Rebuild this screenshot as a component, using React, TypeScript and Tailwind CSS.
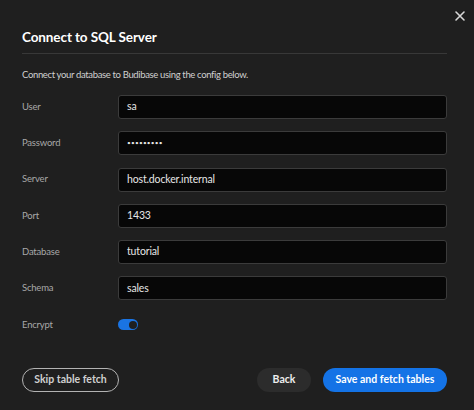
import React from "react";

const font = { fontFamily: '"Lato", "Liberation Sans", sans-serif' };

function Row({ label, value, dots }: { label: string; value: string; dots?: boolean }) {
  return (
    <div className="flex items-center h-[24px]">
      <div className="w-[96px] shrink-0 text-[9.5px] tracking-[-0.2px] text-[#a8a8a8]">{label}</div>
      <div className="flex-1 h-[24px] rounded-[3px] border border-[#3b3b3b] bg-[#070707] flex items-center px-[8px] text-[10.5px] tracking-[-0.15px] text-[#e6e6e6]">
        {dots ? <span className="text-[6.5px] tracking-[0.2px]">{value}</span> : value}
      </div>
    </div>
  );
}

export default function App() {
  return (
    <div className="relative w-[474px] h-[410px] bg-[#1f1f1f] pl-[22px] pr-[27px] pt-[27px]" style={font}>
      <button className="absolute top-[8px] right-[6px] w-[16px] h-[16px] flex items-center justify-center text-[#d8d8d8]">
        <svg width="12" height="12" viewBox="0 0 12 12" fill="none" stroke="currentColor" strokeWidth="1.6" strokeLinecap="round">
          <path d="M2 2 L10 10 M10 2 L2 10" />
        </svg>
      </button>
      <h1 className="text-[13.5px] font-bold leading-[20px] tracking-[-0.1px] text-white">Connect to SQL Server</h1>
      <div className="mt-[6px] h-px bg-[#383838]" />
      <p className="mt-[14px] text-[9.5px] leading-[14px] tracking-[-0.35px] text-[#d0d0d0]">
        Connect your database to Budibase using the config below.
      </p>
      <div className="mt-[13px] flex flex-col gap-[12.3px]">
        <Row label="User" value="sa" />
        <Row label="Password" value="•••••••••" dots />
        <Row label="Server" value="host.docker.internal" />
        <Row label="Port" value="1433" />
        <Row label="Database" value="tutorial" />
        <Row label="Schema" value="sales" />
        <div className="flex items-center h-[24px]">
          <div className="w-[96px] shrink-0 text-[9.5px] tracking-[-0.2px] text-[#a8a8a8]">Encrypt</div>
          <div className="w-[20px] h-[11px] rounded-full bg-[#1a74e3] relative">
            <div className="absolute right-[1.5px] top-[1.5px] w-[8px] h-[8px] rounded-full bg-[#1f1f1f]" />
          </div>
        </div>
      </div>
      <div className="mt-[31px] flex items-center">
        <button className="h-[24px] w-[97px] rounded-full border-[1.5px] border-[#b3b3b3] text-[10.5px] font-bold text-[#d0d0d0]">
          Skip table fetch
        </button>
        <div className="flex-1" />
        <button className="h-[24px] w-[54px] rounded-full bg-[#2c2c2c] text-[10.5px] font-bold text-[#eeeeee]">
          Back
        </button>
        <button className="ml-[12px] h-[24px] w-[124px] rounded-full bg-[#1473e6] text-[10.5px] font-bold text-white">
          Save and fetch tables
        </button>
      </div>
    </div>
  );
}
